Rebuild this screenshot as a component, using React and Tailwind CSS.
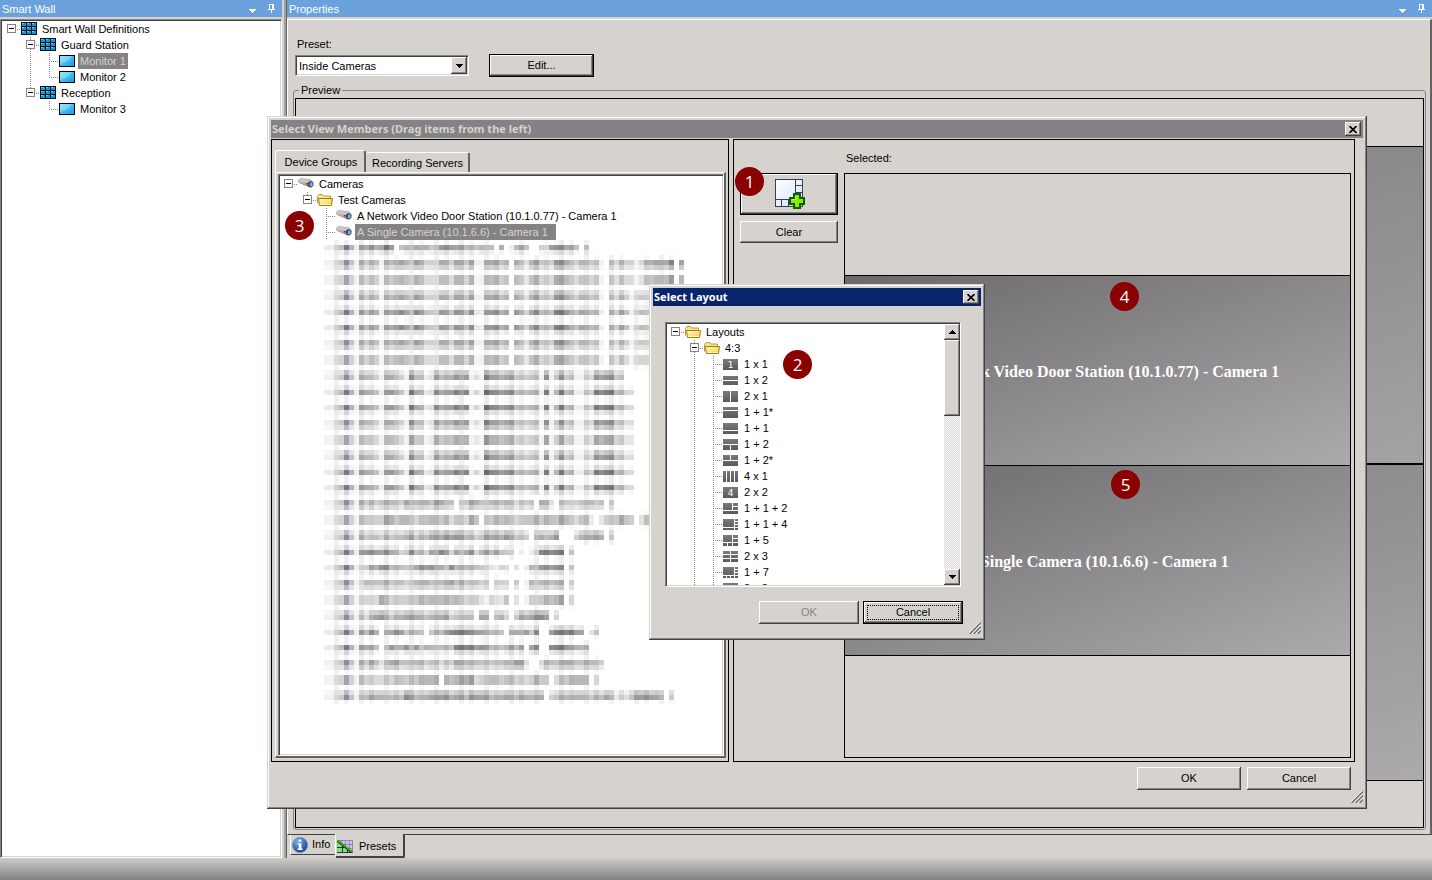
import { useState } from "react";

// classic 3D edges
const raised = "bg-[#d6d3ce] shadow-[inset_-1px_-1px_0_#424142,inset_1px_1px_0_#fff,inset_-2px_-2px_0_#848284]";
const sunken = "border border-t-[#848284] border-l-[#848284] border-r-white border-b-white shadow-[inset_1px_1px_0_#424142,inset_-1px_-1px_0_#d6d3ce]";
const windowEdge = "bg-[#d6d3ce] shadow-[inset_-1px_-1px_0_#424142,inset_1px_1px_0_#d6d3ce,inset_-2px_-2px_0_#848284,inset_2px_2px_0_#fff]";

function Button({ children, className = "", focused = false, ...props }) {
    return <button type="button" {...props} className={`${raised} flex items-center justify-center disabled:text-[#848284] ${focused ? "border border-black" : ""} ${className}`}>
        {children}
    </button>
}

function Badge({ n, className }) {
    return <span className={`absolute z-10 flex size-[29px] items-center justify-center rounded-full bg-[#8b0000] font-['Open_Sans',sans-serif] text-[17px] font-normal text-white ${className}`}>{n}</span>
}

/* ---------- icons ---------- */

function WallIcon() {
    const cells = [0, 1, 2, 3, 4, 5, 6, 7, 8]
    return <svg width="16" height="14" viewBox="0 0 16 14" shapeRendering="crispEdges">
        <rect width="16" height="13" fill="#001018" />
        {cells.map(i => <g key={i}>
            <rect x={1 + (i % 3) * 5} y={1 + Math.floor(i / 3) * 4} width="4" height="3" fill="#0a9ad8" />
            <rect x={1 + (i % 3) * 5} y={1 + Math.floor(i / 3) * 4} width="2" height="1" fill="#5cd0f8" />
        </g>)}
    </svg>
}

function MonitorIcon() {
    return <svg width="16" height="13" viewBox="0 0 16 13">
        <defs>
            <linearGradient id="screen" x1="0" y1="0" x2="1" y2="1">
                <stop offset="0" stopColor="#8fe0ff" />
                <stop offset="0.5" stopColor="#3cbcf4" />
                <stop offset="1" stopColor="#0aa0ec" />
            </linearGradient>
        </defs>
        <rect x="0.5" y="0.5" width="15" height="11" fill="url(#screen)" stroke="#000" />
        <path d="M1 9C5 8 11 6 13 1H1z" fill="#fff" opacity="0.25" />
    </svg>
}

function CameraIcon() {
    return <svg width="16" height="14" viewBox="0 0 16 14">
        <defs>
            <linearGradient id="cam" x1="0" y1="0" x2="0" y2="1">
                <stop offset="0" stopColor="#ececec" />
                <stop offset="1" stopColor="#7a787c" />
            </linearGradient>
        </defs>
        <path d="M0.5 3L3 1.5L13 3L15.5 5.5V8.5L13 10.5L9 9L1 5.5z" fill="url(#cam)" stroke="#8c8a8e" strokeWidth="0.7" />
        <path d="M1 3.5L4 2.5L12 4L9.5 6z" fill="#c8c6ca" />
        <ellipse cx="12.4" cy="7.2" rx="2.6" ry="3" fill="#3f4a5c" />
        <ellipse cx="13.2" cy="7.4" rx="1.5" ry="2" fill="#6fb8e0" />
        <rect x="8" y="6" width="2" height="1.5" fill="#e02020" />
    </svg>
}

function FolderIcon() {
    return <svg width="16" height="14" viewBox="0 0 16 14">
        <defs>
            <linearGradient id="folder" x1="0" y1="0" x2="1" y2="1">
                <stop offset="0" stopColor="#fffbd0" />
                <stop offset="1" stopColor="#f4d040" />
            </linearGradient>
        </defs>
        <path d="M0.5 10.5V3.5L2 1.5H5.5L7 3H13.5V6" fill="#f6e48c" stroke="#b89a48" />
        <path d="M2.5 12.5L1.5 5.5H15.5L14.5 12.5z" fill="url(#folder)" stroke="#a87c08" />
        <path d="M3 11.5H14" stroke="#fff6b0" />
    </svg>
}

function PinIcon() {
    return <svg width="8" height="10" viewBox="0 0 8 10" shapeRendering="crispEdges" fill="#fff">
        <path d="M1 0H6V5H7V6H4V9H3V6H0V5H1zM2 1V5H4V1z" fillRule="evenodd" />
    </svg>
}

function InfoIcon() {
    return <svg width="16" height="16" viewBox="0 0 16 16">
        <defs>
            <radialGradient id="info" cx="0.35" cy="0.25" r="0.8">
                <stop offset="0" stopColor="#7fb0f0" />
                <stop offset="1" stopColor="#12419c" />
            </radialGradient>
        </defs>
        <circle cx="8" cy="8" r="7.6" fill="url(#info)" stroke="#5c7cb4" strokeWidth="0.6" />
        <path d="M6.8 2.5H9.4V4.8H6.8zM5.6 6.2H9.4V11.6H10.6V13H5.6V11.6H6.8V7.6H5.6z" fill="#fff" />
    </svg>
}

function PresetsIcon() {
    return <svg width="16" height="13" viewBox="0 0 16 13">
        <rect width="16" height="13" fill="#c6c3ff" />
        <path d="M4.5 0V13M8.5 0V13M12.5 0V13M0 4.5H16M0 8.5H16M0 0.5H16M15.5 0V13" stroke="#8c88a8" />
        <path d="M0 0V13H16z" fill="#84e070" />
        <path d="M5.5 4V13M10.5 8V13M0 7.5H9M0 12.5H16" stroke="#29306b" />
        <path d="M0 0.5L16 13" stroke="#0c4a10" strokeWidth="2.4" />
        <path d="M0 0L16 12.2" stroke="#52c810" strokeWidth="1.2" />
    </svg>
}

function AddLayoutIcon() {
    return <svg width="31" height="31" viewBox="0 0 31 31">
        <defs>
            <linearGradient id="pane" x1="0" y1="0" x2="1" y2="1">
                <stop offset="0" stopColor="#fff" />
                <stop offset="1" stopColor="#cfe4fa" />
            </linearGradient>
        </defs>
        <g shapeRendering="crispEdges">
            <rect x="0.5" y="0.5" width="27" height="27" fill="url(#pane)" stroke="#39396b" />
            <path d="M20.5 0V28M0 20.5H28M6.5 20V28M13.5 20V28M20 6.5H28M20 13.5H28" stroke="#39396b" />
        </g>
        <path d="M19 15H25V19H29V25H25V29H19V25H15V19H19z" fill="#84f000" stroke="#125a08" strokeWidth="2" />
        <path d="M20.5 17V20.5H17" stroke="#d0ff80" fill="none" />
    </svg>
}

function ResizeGrip({ className }) {
    return <svg width="12" height="12" viewBox="0 0 12 12" className={className}>
        <path d="M-1 12L12 -1M3 12L12 3M7 12L12 7" stroke="#fff" />
        <path d="M0.5 12L12 0.5M4.5 12L12 4.5M8.5 12L12 8.5" stroke="#6c6a6c" strokeWidth="1.4" />
    </svg>
}

function CloseButton() {
    return <Button aria-label="Close" className="h-[14px] w-4">
        <svg width="8" height="7" viewBox="0 0 8 7" stroke="#000" strokeWidth="1.6"><path d="M0.5 0L7.5 7M7.5 0L0.5 7" /></svg>
    </Button>
}

function Arrow({ up = false, fill = "#000" }) {
    return <svg width="7" height="4" viewBox="0 0 7 4" shapeRendering="crispEdges" fill={fill}>
        <path d={up ? "M3 0H4V1H5V2H6V3H7V4H0V3H1V2H2V1H3z" : "M0 0H7V1H6V2H5V3H4V4H3V3H2V2H1V1H0z"} />
    </svg>
}

// panes of each layout as [x, y, w, h]
const layouts = [
    { name: "1 x 1", digit: "1", panes: [[0, 0, 15, 11]] },
    { name: "1 x 2", panes: [[0, 1, 15, 4], [0, 6, 15, 4]] },
    { name: "2 x 1", panes: [[0, 0, 7, 11], [8, 0, 7, 11]] },
    { name: "1 + 1*", panes: [[0, 0, 15, 3], [0, 4, 15, 7]] },
    { name: "1 + 1", panes: [[0, 0, 15, 7], [0, 8, 15, 3]] },
    { name: "1 + 2", panes: [[0, 0, 15, 5], [0, 6, 7, 5], [8, 6, 7, 5]] },
    { name: "1 + 2*", panes: [[0, 0, 7, 5], [8, 0, 7, 5], [0, 6, 15, 5]] },
    { name: "4 x 1", panes: [[0, 0, 3, 11], [4, 0, 3, 11], [8, 0, 3, 11], [12, 0, 3, 11]] },
    { name: "2 x 2", digit: "4", panes: [[0, 0, 15, 11]] },
    { name: "1 + 1 + 2", panes: [[0, 0, 9, 7], [10, 0, 5, 3], [10, 4, 5, 3], [0, 8, 15, 3]] },
    { name: "1 + 1 + 4", panes: [[0, 0, 11, 8], [12, 0, 3, 2], [12, 3, 3, 2], [12, 6, 3, 2], [0, 9, 11, 2], [12, 9, 3, 2]] },
    { name: "1 + 5", panes: [[0, 0, 9, 7], [10, 0, 5, 3], [10, 4, 5, 3], [0, 8, 4, 3], [5, 8, 4, 3], [10, 8, 5, 3]] },
    { name: "2 x 3", panes: [[0, 0, 7, 3], [8, 0, 7, 3], [0, 4, 7, 3], [8, 4, 7, 3], [0, 8, 7, 3], [8, 8, 7, 3]] },
    { name: "1 + 7", panes: [[0, 0, 11, 8], [12, 0, 3, 2], [12, 3, 3, 2], [12, 6, 3, 2], [0, 9, 3, 2], [4, 9, 3, 2], [8, 9, 3, 2], [12, 9, 3, 2]] },
    { name: "3 x 3", digit: "9", panes: [[0, 0, 15, 11]] },
]

function LayoutIcon({ panes, digit }) {
    return <svg width="16" height="11" viewBox="0 0 16 11">
        <defs>
            <linearGradient id="tile" gradientUnits="userSpaceOnUse" x1="0" y1="0" x2="0" y2="11">
                <stop offset="0" stopColor="#7b797b" />
                <stop offset="1" stopColor="#5a595a" />
            </linearGradient>
        </defs>
        {panes.map(([x, y, w, h]) => <rect key={`${x}-${y}`} x={x} y={y} width={w} height={h} fill="url(#tile)" shapeRendering="crispEdges" />)}
        {digit && <text x="7.5" y="9" textAnchor="middle" fontSize="9" fontFamily="DejaVu Sans, sans-serif" fill="#fff">{digit}</text>}
    </svg>
}

/* ---------- tree ---------- */

function Guide({ dotted }) {
    return <svg width="19" height="16" className="shrink-0" shapeRendering="crispEdges">
        {dotted && <path d="M4.5 0V16" stroke="#848284" strokeDasharray="1 1" />}
    </svg>
}

// guides: one flag per ancestor level, true when its line runs through this row
function TreeRow({ guides = [], icon, label, open, root, last, selected, wide }) {
    return <li className="flex h-4 items-center whitespace-nowrap">
        {guides.map((g, i) => <Guide key={i} dotted={g} />)}
        <svg width="14" height="16" className="shrink-0" shapeRendering="crispEdges">
            {!root && <path d="M4.5 0V8" stroke="#848284" strokeDasharray="1 1" />}
            {!root && !last && <path d="M4.5 8V16" stroke="#848284" strokeDasharray="1 1" />}
            <path d="M4 8.5H14" stroke="#848284" strokeDasharray="1 1" />
            {open && <>
                <rect x="0.5" y="3.5" width="8" height="8" fill="#fff" stroke="#848284" />
                <path d="M2 7.5H7" stroke="#000" />
            </>}
        </svg>
        <span className="flex w-4 shrink-0">{icon}</span>
        <span className={`ml-[3px] h-4 pl-[2px] leading-4 ${wide ? "pr-2" : "pr-[2px]"} ${selected ? "bg-[#848284] text-[#d6d3ce]" : ""}`}>{label}</span>
    </li>
}

/* ---------- censored part of the camera list ---------- */

// one digit per 5px block, 0 = blank, 9 = darkest
const icon = "1124751"
const doorStation = icon + "54551555753754326546546215665506435644477644544410435431356656806"
const doorStationCut = doorStation.slice(0, 61) + "1243"
const fixedCamera = icon + "5544156441754226556757131876666444441714744113377774432"
const censored = [
    icon + "5565576044354533666554444340501454003266655403",
    doorStation, doorStation,
    doorStationCut, doorStationCut, doorStationCut, doorStationCut, doorStationCut,
    fixedCamera.slice(0, 60), fixedCamera, fixedCamera, fixedCamera, fixedCamera, fixedCamera, fixedCamera, fixedCamera,
    icon + "545445544645564664503466435555434440653044344453503",
    icon + "5545477476445665564544760456664446565665764455203445764035673",
    icon + "544535445564556667776554466667544404646700045566603",
    icon + "56665654336443547535356345454320101277777030",
    icon + "23556644433566645374444432213202014366666030",
    icon + "25454544533556445574544533034304015355555030",
    icon + "34347544544566656666444521423503014356667030",
    icon + "435775456666555566444540650463046667860300",
    icon + "546504566344303445777766544440454636006777765023",
    icon + "5554036456363543444777766544445450560077765544",
    icon + "5465246654455444344655554444554763003554565545544",
    icon + "544434456455676606667784446555544446540355676503",
    icon + "456654555865566677666577665566556655604455565445564233467776403",
]

function CensoredList() {
    const blocks = []
    censored.forEach((line, n) => {
        const mid = 8 + n * 16
        for (let y = Math.floor((mid - 6) / 5) * 5; y < mid + 6; y += 5) {
            const cover = Math.max(0, Math.min(y + 5, mid + 3) - Math.max(y, mid - 3))
            const faint = Math.max(0, Math.min(y + 5, mid + 5) - Math.max(y, mid - 5))
            const weight = (cover * 0.85 + faint * 0.15) / 5
            line.split("").forEach((d, i) => {
                const wobble = ((i * 7 + y * 3 + i * y) % 5) - 2
                const dark = Math.max(0, Number(d) * weight * 18 + (d > 1 ? wobble * 6 : 0))
                if (d === "0" || dark < 4) return
                const v = Math.round(255 - Math.min(150, dark))
                const fill = i === 4 ? `rgb(${v + 2},${v - 4},${v + 2})` : i === 5 ? `rgb(${v - 8},${v + 4},${v + 14})` : `rgb(${v},${v},${v})`
                blocks.push(<rect key={`${n}-${i}-${y}`} x={i * 5} y={y} width="5" height="5" fill={fill} />)
            })
        }
    })
    return <svg width="370" height="464" viewBox="0 0 370 464" shapeRendering="crispEdges" className="ml-10 max-w-none" aria-hidden="true">{blocks}</svg>
}

/* ---------- panels ---------- */

function PanelTitle({ children }) {
    return <header className="flex h-[17px] shrink-0 items-center bg-[#6ba2de] pl-[2px] text-white">
        <h2 className="flex-1 leading-4">{children}</h2>
        <span className="mt-1 mr-3"><Arrow fill="#fff" /></span>
        <span className="mr-[6px]"><PinIcon /></span>
    </header>
}

function SmartWallPanel() {
    return <aside className="flex w-[282px] shrink-0 flex-col">
        <PanelTitle>Smart Wall</PanelTitle>
        <ul className={`mt-[2px] flex-1 bg-white pl-[6px] pt-px ${sunken}`}>
            <TreeRow root open icon={<WallIcon />} label="Smart Wall Definitions" />
            <TreeRow guides={[false]} open icon={<WallIcon />} label="Guard Station" />
            <TreeRow guides={[false, true]} icon={<MonitorIcon />} label="Monitor 1" selected />
            <TreeRow guides={[false, true]} last icon={<MonitorIcon />} label="Monitor 2" />
            <TreeRow guides={[false]} last open icon={<WallIcon />} label="Reception" />
            <TreeRow guides={[false, false]} last icon={<MonitorIcon />} label="Monitor 3" />
        </ul>
    </aside>
}

function PropertiesPanel() {
    const [preset, setPreset] = useState("Inside Cameras")
    return <section className="flex min-w-0 flex-1 flex-col">
        <PanelTitle>Properties</PanelTitle>
        <div className="mt-[2px] flex flex-1 flex-col border-t border-l border-white border-r-2 border-r-[#636163] border-b border-b-[#424142] pl-[5px] pr-1 pb-1">
            <label htmlFor="preset" className="ml-1 mt-4 leading-4">Preset:</label>
            <div className="ml-[2px] mt-[2px] flex items-center gap-5">
                <div className={`relative h-[21px] w-[174px] bg-white ${sunken}`}>
                    <select id="preset" value={preset} onChange={e => setPreset(e.target.value)} className="h-full w-full appearance-none bg-transparent pl-[3px] leading-4 outline-none">
                        <option>Inside Cameras</option>
                    </select>
                    <span className={`pointer-events-none absolute top-px right-px bottom-px flex w-4 items-center justify-center ${raised}`}><Arrow /></span>
                </div>
                <Button focused className="h-[23px] w-[105px]">Edit...</Button>
            </div>
            <fieldset className="mt-[6px] flex min-w-0 flex-1 flex-col rounded-[3px] border border-[#848284] px-px pb-px">
                <legend className="ml-1 px-[2px] leading-[15px]">Preview</legend>
                <div className="flex flex-1 flex-col border border-black">
                    <div className="h-[48px] border-b border-black" />
                    <div className="flex-1 border-b-2 border-black bg-linear-to-br from-[#737173] to-[#a5a2a5]" />
                    <div className="flex-1 border-b border-black bg-linear-to-br from-[#737173] to-[#adaaad]" />
                    <div className="h-[46px]" />
                </div>
            </fieldset>
        </div>
        <nav className="flex h-[23px] items-start pl-[3px]">
            <button type="button" className="flex h-[20px] w-[45px] items-center border-b border-l border-b-[#424142] border-l-white pl-px">
                <InfoIcon /><span className="ml-1">Info</span>
            </button>
            <button type="button" className="-mt-px flex h-[24px] w-[70px] items-center rounded-b-[2px] border-r-2 border-b-2 border-l border-[#424142] border-l-white bg-[#d6d3ce] pt-[2px] pl-px">
                <PresetsIcon /><span className="ml-[6px]">Presets</span>
            </button>
        </nav>
    </section>
}

function SelectedView({ name, badge, badgeClass }) {
    return <div className="relative flex h-[190px] items-center justify-center border-b border-black bg-linear-to-br from-[#6b696b] to-[#adaaad] pt-[2px] font-['Liberation_Serif',serif] text-[16px] font-bold whitespace-nowrap text-white">
        {name}
        <Badge n={badge} className={badgeClass} />
    </div>
}

function ViewMembersDialog() {
    return <div role="dialog" aria-label="Select View Members" className={`absolute top-[116px] right-[65px] bottom-[71px] left-[267px] flex flex-col p-1 ${windowEdge}`}>
        <header className="flex h-[18px] shrink-0 items-center bg-[#848284] pr-[2px] pl-px font-['Noto_Sans',sans-serif] font-bold text-[#d6d3ce]">
            <h2 className="flex-1">Select View Members (Drag items from the left)</h2>
            <CloseButton />
        </header>
        <div className="mt-px mr-2 flex flex-1 gap-1">
            <div className="flex w-[458px] shrink-0 flex-col border border-black pt-[10px] pr-[2px] pb-[3px] pl-[3px]">
                <div role="tablist" className="flex items-end">
                    <button type="button" role="tab" className="relative -mb-px h-[23px] w-[91px] rounded-t-[3px] border-t border-r-2 border-l border-t-white border-r-[#636163] border-l-white bg-[#d6d3ce] pl-[2px]">Device Groups</button>
                    <button type="button" role="tab" className="h-5 w-[104px] rounded-t-[3px] border-t border-r-2 border-t-white border-r-[#636163] pt-px pl-px">Recording Servers</button>
                </div>
                <div className="relative flex flex-1 flex-col border-t border-r-2 border-b-2 border-l border-[#636163] border-t-white border-l-white pt-px pl-[2px]">
                    <ul className={`flex-1 overflow-hidden bg-white pt-px pl-[5px] ${sunken}`}>
                        <TreeRow root open icon={<CameraIcon />} label="Cameras" />
                        <TreeRow guides={[false]} last open icon={<FolderIcon />} label="Test Cameras" />
                        <TreeRow guides={[false, false]} icon={<CameraIcon />} label="A Network Video Door Station (10.1.0.77) - Camera 1" />
                        <TreeRow guides={[false, false]} icon={<CameraIcon />} label="A Single Camera (10.1.6.6) - Camera 1" selected wide />
                        <li><CensoredList /></li>
                    </ul>
                    <Badge n="3" className="top-[38px] left-[9px]" />
                </div>
            </div>
            <div className="flex min-w-0 flex-1 gap-[6px] border border-black py-[3px] pr-[3px] pl-[6px]">
                <div className="relative mt-[30px] flex w-[98px] shrink-0 flex-col gap-[6px]">
                    <Button focused aria-label="Select layout" className="h-[42px] pt-px pl-[2px]"><AddLayoutIcon /></Button>
                    <Button className="h-[22px]">Clear</Button>
                    <Badge n="1" className="-top-[6px] -left-[5px]" />
                </div>
                <div className="flex min-w-0 flex-1 flex-col">
                    <h3 className="mt-[7px] mb-[7px] ml-[2px] leading-4">Selected:</h3>
                    <div className="flex flex-1 flex-col justify-center overflow-hidden border border-black">
                        <div className="border-t border-black">
                            <SelectedView name="A Network Video Door Station (10.1.0.77) - Camera 1" badge="4" badgeClass="top-[6px] left-[265px]" />
                            <SelectedView name="A Single Camera (10.1.6.6) - Camera 1" badge="5" badgeClass="top-[4px] left-[266px]" />
                        </div>
                    </div>
                </div>
            </div>
        </div>
        <footer className="flex h-[43px] shrink-0 justify-end gap-[6px] pt-[5px] pr-3">
            <Button className="h-[23px] w-[104px]">OK</Button>
            <Button className="h-[23px] w-[104px]">Cancel</Button>
        </footer>
        <ResizeGrip className="absolute right-1 bottom-[6px]" />
    </div>
}

function LayoutDialog() {
    return <div role="dialog" aria-label="Select Layout" className={`absolute top-[284px] left-[649px] flex w-[336px] flex-col p-1 ${windowEdge}`}>
        <header className="flex h-[18px] items-center bg-[#08246b] pr-[2px] pl-px font-['Noto_Sans',sans-serif] font-bold text-white">
            <h2 className="flex-1">Select Layout</h2>
            <CloseButton />
        </header>
        <div className={`relative mt-4 mr-5 ml-3 flex h-[265px] bg-white py-px pl-px ${sunken}`}>
            <ul className="flex-1 overflow-hidden pl-1">
                <TreeRow root open icon={<FolderIcon />} label="Layouts" />
                <TreeRow guides={[false]} open icon={<FolderIcon />} label="4:3" />
                {layouts.map(l => <TreeRow key={l.name} guides={[false, true]} icon={<LayoutIcon panes={l.panes} digit={l.digit} />} label={l.name} />)}
            </ul>
            <div className="flex w-4 flex-col bg-[repeating-conic-gradient(#d6d3ce_0_25%,#fff_0_50%)] bg-size-[2px_2px]">
                <Button aria-label="Scroll up" className="h-4"><Arrow up /></Button>
                <div className={`h-[76px] ${raised}`} />
                <Button aria-label="Scroll down" className="mt-auto h-4"><Arrow /></Button>
            </div>
            <Badge n="2" className="top-[27px] left-[117px]" />
        </div>
        <footer className="mt-[14px] mr-[18px] mb-3 flex justify-end gap-1">
            <Button disabled className="h-[23px] w-[100px]">OK</Button>
            <Button focused className="h-[23px] w-[100px] p-[3px]">
                <span className="flex h-full w-full items-center justify-center border border-dotted border-black">Cancel</span>
            </Button>
        </footer>
        <ResizeGrip className="absolute right-1 bottom-[6px]" />
    </div>
}

export default function App() {
    return <div className="relative flex min-h-screen flex-col overflow-hidden bg-[#d6d3ce] font-['Liberation_Sans',Arial,sans-serif] text-[11px] text-black">
        <main className="flex flex-1">
            <SmartWallPanel />
            <div className="ml-[2px] w-[3px] shrink-0 border-r border-[#636163] bg-[#a5a2a5]" />
            <PropertiesPanel />
        </main>
        <div className="h-[22px] bg-linear-to-b from-[#ceccc8] to-[#848284]" />
        <ViewMembersDialog />
        <LayoutDialog />
    </div>
}
